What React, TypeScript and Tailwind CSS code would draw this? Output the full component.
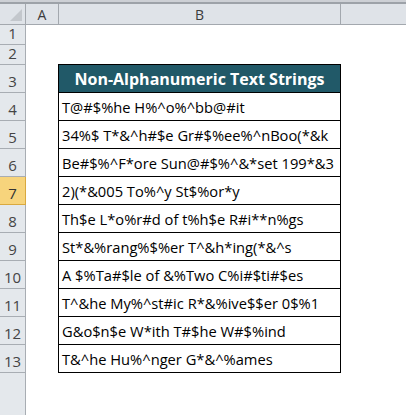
import React from "react";

const rows: { n: number; h: number; text?: string; header?: boolean }[] = [
  { n: 1, h: 20 },
  { n: 2, h: 20 },
  { n: 3, h: 28, text: "Non-Alphanumeric Text Strings", header: true },
  { n: 4, h: 28, text: "T@#$%he H%^o%^bb@#it" },
  { n: 5, h: 28, text: "34%$ T*&^h#$e Gr#$%ee%^nBoo(*&k" },
  { n: 6, h: 28, text: "Be#$%^F*ore Sun@#$%^&*set 199*&3" },
  { n: 7, h: 28, text: "2)(*&005 To%^y St$%or*y" },
  { n: 8, h: 28, text: "Th$e L*o%r#d of t%h$e R#i**n%gs" },
  { n: 9, h: 28, text: "St*&%rang%$%er T^&h*ing(*&^s" },
  { n: 10, h: 28, text: "A $%Ta#$le of &%Two C%i#$ti#$es" },
  { n: 11, h: 28, text: "T^&he My%^st#ic R*&%ive$$er 0$%1" },
  { n: 12, h: 28, text: "G&o$n$e W*ith T#$he W#$%ind" },
  { n: 13, h: 28, text: "T&^he Hu%^nger G*&^%ames" },
];

const font = { fontFamily: "'Open Sans', Lato, sans-serif" };

export default function App() {
  return (
    <div className="w-[406px] h-[415px] overflow-hidden bg-white flex flex-col" style={font}>
      <div className="h-[2px] bg-[#cdd0d5]" />
      <div className="h-[2px] bg-[#9da2a8]" />
      <div className="flex h-[21px] bg-[#dfe3e8] border-b border-[#a3a8ae] shrink-0">
        <div className="w-[26px] border-r border-[#a3a8ae] relative">
          <svg className="absolute right-[3px] bottom-[3px]" width="12" height="12" viewBox="0 0 12 12">
            <polygon points="12,0 12,12 0,12" fill="#c3c7cc" />
          </svg>
        </div>
        <div className="w-[33px] border-r border-[#a3a8ae] flex items-center justify-center text-[14px] text-[#3c3c3c]">A</div>
        <div className="w-[282px] border-r border-[#a3a8ae] flex items-center justify-center text-[14px] text-[#3c3c3c]">B</div>
        <div className="flex-1" />
      </div>
      {rows.map((r) => {
        const sel = r.n === 7;
        return (
          <div key={r.n} className="flex shrink-0" style={{ height: r.h }}>
            <div
              className={
                sel
                  ? "w-[26px] bg-[#f7d47c] border-r border-b border-[#d9a93f] flex items-end justify-center pb-[2px] text-[15px] leading-[18px] text-[#333]"
                  : "w-[26px] bg-[#e4e8ec] border-r border-b border-[#a8adb3] flex items-end justify-center pb-[2px] text-[15px] leading-[18px] text-[#444]"
              }
            >
              {r.n}
            </div>
            <div className="w-[32px]" />
            {r.header ? (
              <div className="w-[283px] -mt-px h-[calc(100%+1px)] bg-[#215968] border border-black flex items-center justify-center text-white font-bold text-[16px]">
                {r.text}
              </div>
            ) : r.text ? (
              <div className="w-[283px] border-l border-r border-b border-black flex items-end pb-[4px] pl-[3px] text-[14.7px] leading-[18px] text-black">
                {r.text}
              </div>
            ) : (
              <div className="w-[283px]" />
            )}
            <div className="flex-1" />
          </div>
        );
      })}
      <div className="flex-1 flex">
        <div className="w-[26px] bg-[#e4e8ec] border-r border-[#a8adb3]" />
        <div className="flex-1" />
      </div>
    </div>
  );
}
